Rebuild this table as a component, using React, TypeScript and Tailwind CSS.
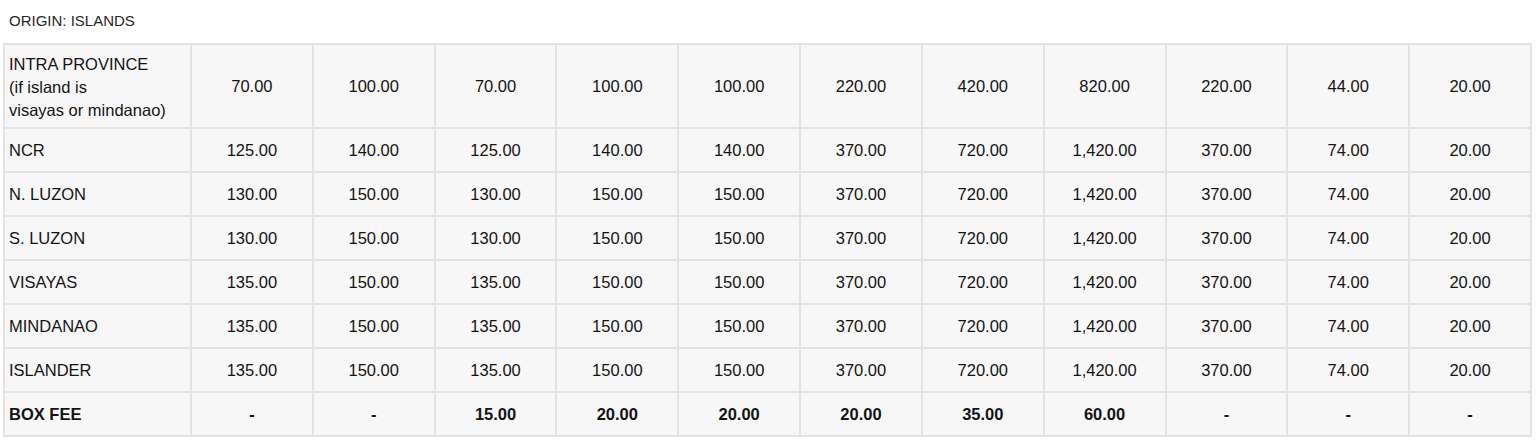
import React from 'react';

interface RateRow {
    label: React.ReactNode;
    values: string[];
    bold?: boolean;
    tall?: boolean;
}

const standard = ['370.00', '720.00', '1,420.00', '370.00', '74.00', '20.00'];

const rows: RateRow[] = [
    {
        label: (
            <>
                INTRA PROVINCE
                <br />
                (if island is
                <br />
                visayas or mindanao)
            </>
        ),
        values: ['70.00', '100.00', '70.00', '100.00', '100.00', '220.00', '420.00', '820.00', '220.00', '44.00', '20.00'],
        tall: true,
    },
    { label: 'NCR', values: ['125.00', '140.00', '125.00', '140.00', '140.00', ...standard] },
    { label: 'N. LUZON', values: ['130.00', '150.00', '130.00', '150.00', '150.00', ...standard] },
    { label: 'S. LUZON', values: ['130.00', '150.00', '130.00', '150.00', '150.00', ...standard] },
    { label: 'VISAYAS', values: ['135.00', '150.00', '135.00', '150.00', '150.00', ...standard] },
    { label: 'MINDANAO', values: ['135.00', '150.00', '135.00', '150.00', '150.00', ...standard] },
    { label: 'ISLANDER', values: ['135.00', '150.00', '135.00', '150.00', '150.00', ...standard] },
    {
        label: 'BOX FEE',
        values: ['-', '-', '15.00', '20.00', '20.00', '20.00', '35.00', '60.00', '-', '-', '-'],
        bold: true,
    },
];

export default function App() {
    return (
        <div className="min-h-[440px] bg-white text-[#141414] font-['Liberation_Sans',Arial,sans-serif]">
            {/* Section caption */}
            <div className="pl-[9px] pt-[11px] text-[15px] leading-[20px] text-[#262626]">ORIGIN: ISLANDS</div>

            <table className="mt-[12px] ml-[3px] w-[1529px] table-fixed border-collapse text-[16.5px] leading-[22px]">
                <colgroup>
                    <col className="w-[187px]" />
                    {Array.from({ length: 11 }).map((_, i) => (
                        <col key={i} />
                    ))}
                </colgroup>
                <tbody>
                    {rows.map((row, r) => (
                        <tr key={r} className={row.tall ? 'h-[84px]' : 'h-[44px]'}>
                            <td
                                className={`border-2 border-[#e3e3e3] bg-[#f7f7f7] pl-[4px] pr-[4px] align-middle ${
                                    row.tall ? 'pt-[3px] leading-[23px]' : ''
                                } ${row.bold ? 'font-bold' : ''}`}
                            >
                                {row.label}
                            </td>
                            {row.values.map((v, c) => (
                                <td
                                    key={c}
                                    className={`border-2 border-[#e3e3e3] bg-[#f7f7f7] text-center align-middle ${
                                        row.bold ? 'font-bold' : ''
                                    }`}
                                >
                                    {v}
                                </td>
                            ))}
                        </tr>
                    ))}
                </tbody>
            </table>
        </div>
    );
}
